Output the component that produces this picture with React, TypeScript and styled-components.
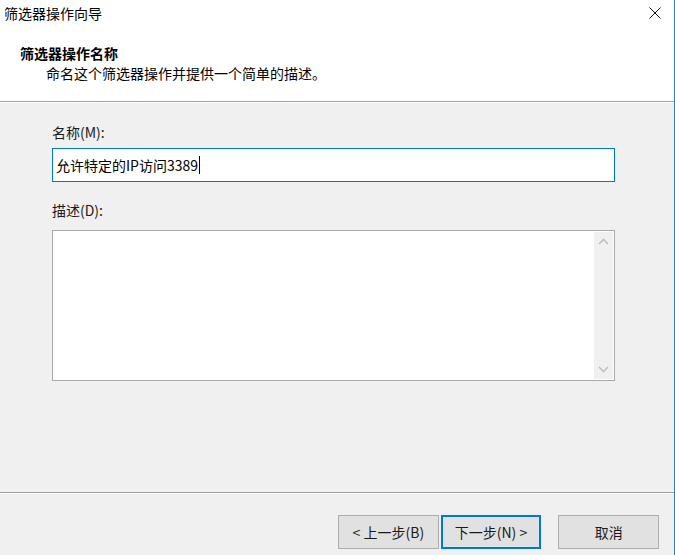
import React from 'react'
import styled, { createGlobalStyle } from 'styled-components'

const GlobalStyle = createGlobalStyle`
    html, body {
        margin: 0;
        padding: 0;
        background: #f0f0f0;
    }
    body {
        font-family: "Noto Sans CJK SC", "Noto Sans", "Liberation Sans", sans-serif;
        font-size: 14px;
        color: #000;
    }
`

const Window = styled.div`
    width: 675px;
    height: 555px;
    box-sizing: border-box;
    border-right: 1px solid #1883d7;
    background: #f0f0f0;
    display: flex;
    flex-direction: column;
    overflow: hidden;
`

const TitleBar = styled.div`
    height: 25px;
    background: #fff;
    display: flex;
    flex-direction: row;
    align-items: center;
    padding-left: 4px;
    line-height: 20px;
`

const TitleText = styled.span`
    flex-grow: 1;
`

const CloseButton = styled.div`
    width: 30px;
    height: 25px;
    display: flex;
    align-items: center;
    justify-content: center;
    margin-right: 4px;
`

const Header = styled.div`
    background: #fff;
    padding: 18px 0 18px 20px;
    line-height: 20px;
    border-bottom: 1px solid #a0a0a0;
    box-shadow: 0 1px 0 #ffffff;
`

const Heading = styled.div`
    font-weight: bold;
`

const SubHeading = styled.div`
    padding-left: 26px;
`

const Body = styled.div`
    flex-grow: 1;
    padding: 19px 59px 0 52px;
    display: flex;
    flex-direction: column;
    border-bottom: 1px solid #a0a0a0;
    box-shadow: 0 1px 0 #ffffff;
    margin-top: 1px;
`

const Label = styled.div<{ $gap: number }>`
    line-height: 20px;
    margin-bottom: ${p => p.$gap}px;
    color: #1a1a1a;
`

const TextBox = styled.div`
    height: 34px;
    box-sizing: border-box;
    border: 1px solid #0078d7;
    background: #fff;
    display: flex;
    align-items: center;
    padding-left: 3px;
    margin-bottom: 18px;
`

const Caret = styled.span`
    display: inline-block;
    width: 1px;
    height: 18px;
    background: #000;
    margin-left: 1px;
    vertical-align: middle;
`

const TextArea = styled.div`
    height: 151px;
    box-sizing: border-box;
    border: 1px solid #a9a9a9;
    background: #fff;
    display: flex;
    flex-direction: row;
    justify-content: flex-end;
`

const ScrollBar = styled.div`
    width: 19px;
    background: #f0f0f0;
    margin: 1px 1px 1px 0;
    display: flex;
    flex-direction: column;
    justify-content: space-between;
    align-items: center;
    padding: 6px 0;
`

const Footer = styled.div`
    height: 62px;
    display: flex;
    flex-direction: row;
    align-items: flex-start;
    padding: 22px 15px 0 338px;
    box-sizing: border-box;
`

const Button = styled.div<{ $primary?: boolean; $gapLeft?: number }>`
    width: 101px;
    height: 34px;
    box-sizing: border-box;
    margin-left: ${p => p.$gapLeft ?? 0}px;
    background: #e1e1e1;
    border: ${p => (p.$primary ? '2px solid #0078d7' : '1px solid #adadad')};
    display: flex;
    align-items: center;
    justify-content: center;
    line-height: 20px;
    color: #1a1a1a;
`

const Arrow: React.FC<{ up?: boolean }> = ({ up }) => (
    <svg width="11" height="7" viewBox="0 0 11 7">
        <path
            d={up ? 'M1 6 L5.5 1.5 L10 6' : 'M1 1 L5.5 5.5 L10 1'}
            fill="none"
            stroke="#c0c0c0"
            strokeWidth="1.6"
        />
    </svg>
)

const App: React.FC = () => {
    return (
        <>
            <GlobalStyle />
            <Window>
                <TitleBar>
                    <TitleText>筛选器操作向导</TitleText>
                    <CloseButton>
                        <svg width="12" height="12" viewBox="0 0 12 12">
                            <path d="M0.5 0.5 L11.5 11.5 M11.5 0.5 L0.5 11.5" stroke="#111" strokeWidth="1" />
                        </svg>
                    </CloseButton>
                </TitleBar>
                <Header>
                    <Heading>筛选器操作名称</Heading>
                    <SubHeading>命名这个筛选器操作并提供一个简单的描述。</SubHeading>
                </Header>
                <Body>
                    <Label $gap={6}>名称(M):</Label>
                    <TextBox>
                        允许特定的IP访问3389<Caret />
                    </TextBox>
                    <Label $gap={10}>描述(D):</Label>
                    <TextArea>
                        <ScrollBar>
                            <Arrow up />
                            <Arrow />
                        </ScrollBar>
                    </TextArea>
                </Body>
                <Footer>
                    <Button>&lt; 上一步(B)</Button>
                    <Button $primary $gapLeft={2}>下一步(N) &gt;</Button>
                    <Button $gapLeft={17}>取消</Button>
                </Footer>
            </Window>
        </>
    )
}

export default App
